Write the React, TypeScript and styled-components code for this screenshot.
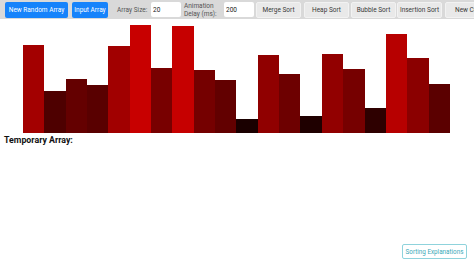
import React from "react";
import styled, { createGlobalStyle } from "styled-components";

const Global = createGlobalStyle`
  html, body { margin: 0; padding: 0; background: #fff; }
  body { font-family: Roboto, "Liberation Sans", Arial, sans-serif; width: 474px; height: 266px; overflow: hidden; }
`;

const Page = styled.div`
  position: relative;
  width: 474px;
  height: 266px;
  display: flex;
  flex-direction: column;
`;

const Toolbar = styled.div`
  display: flex;
  align-items: center;
  height: 19px;
  background: #d9d9d9;
  padding-left: 5px;
  white-space: nowrap;
  overflow: hidden;
`;

const PrimaryButton = styled.button<{ $w: number; $ml?: number }>`
  flex: none;
  width: ${(p) => p.$w}px;
  height: 16px;
  margin-left: ${(p) => p.$ml ?? 0}px;
  padding: 0;
  border: none;
  border-radius: 2px;
  background: #1683fb;
  color: #fff;
  font-family: Roboto, "Liberation Sans", sans-serif;
  font-size: 6.5px;
`;

const SortButton = styled.button<{ $ml?: number; $auto?: boolean }>`
  flex: none;
  width: ${(p) => (p.$auto ? "auto" : "45px")};
  height: 16px;
  margin-left: ${(p) => p.$ml ?? 2}px;
  padding: ${(p) => (p.$auto ? "0 9px" : "0")};
  border: 1px solid #f2f2f2;
  border-radius: 2px;
  background: #e9e9e9;
  color: #3a3a3a;
  font-family: Roboto, "Liberation Sans", sans-serif;
  font-size: 6.5px;
  text-align: center;
  white-space: nowrap;
  overflow: hidden;
`;

const Label = styled.span<{ $w: number; $ml: number; $wrap?: boolean }>`
  flex: none;
  width: ${(p) => p.$w}px;
  margin-left: ${(p) => p.$ml}px;
  font-size: 6.5px;
  line-height: 8px;
  color: #555;
  white-space: ${(p) => (p.$wrap ? "normal" : "nowrap")};
`;

const NumInput = styled.input<{ $ml: number }>`
  flex: none;
  box-sizing: border-box;
  width: 30px;
  height: 15px;
  margin-left: ${(p) => p.$ml}px;
  padding: 0 2px;
  border: none;
  border-radius: 2px;
  background: #fff;
  font-family: Roboto, "Liberation Sans", sans-serif;
  font-size: 6.5px;
  color: #222;
  outline: none;
`;

const Chart = styled.div`
  display: flex;
  align-items: flex-end;
  height: 113px;
  margin-top: 1px;
  padding-left: 23px;
`;

const Bar = styled.div`
  flex: none;
  width: 21.35px;
`;

const TempTitle = styled.div`
  margin: 1px 0 0 4px;
  font-weight: 700;
  font-size: 8.8px;
  line-height: 12px;
  color: #111;
`;

const ExplainButton = styled.button`
  position: absolute;
  left: 402px;
  top: 244px;
  width: 65px;
  height: 15px;
  padding: 0;
  background: #fff;
  border: 1px solid #8fd3dc;
  border-radius: 2px;
  color: #3aa9b8;
  font-family: Roboto, "Liberation Sans", sans-serif;
  font-size: 6.3px;
`;

const heights = [88, 42, 54, 48, 87, 108, 65, 107, 63, 53, 14, 78, 59, 17, 79, 64, 25, 99, 75, 49];

export default function App() {
  return (
    <Page>
      <Global />
      <Toolbar>
        <PrimaryButton $w={63}>New Random Array</PrimaryButton>
        <PrimaryButton $w={36} $ml={4}>Input Array</PrimaryButton>
        <Label $w={34} $ml={9}>Array Size:</Label>
        <NumInput $ml={0} defaultValue="20" />
        <Label $w={38} $ml={3} $wrap>Animation Delay (ms):</Label>
        <NumInput $ml={2} defaultValue="200" />
        <SortButton $ml={2}>Merge Sort</SortButton>
        <SortButton $ml={3}>Heap Sort</SortButton>
        <SortButton>Bubble Sort</SortButton>
        <SortButton $ml={1}>Insertion Sort</SortButton>
        <SortButton $ml={3} $auto>New Cell Array</SortButton>
      </Toolbar>
      <Chart>
        {heights.map((h, i) => (
          <Bar
            key={i}
            style={{ height: h, background: `rgb(${Math.round(h * 1.85)},0,0)` }}
          />
        ))}
      </Chart>
      <TempTitle>Temporary Array:</TempTitle>
      <ExplainButton>Sorting Explanations</ExplainButton>
    </Page>
  );
}
